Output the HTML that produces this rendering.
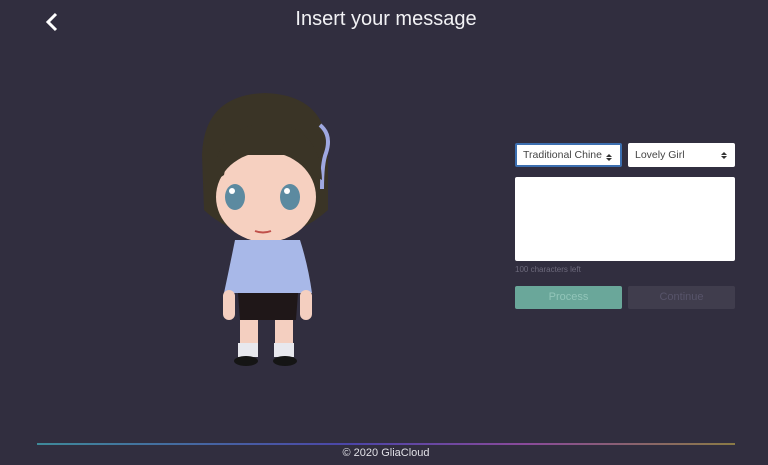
<!DOCTYPE html>
<html><head><style>
body{margin:0;width:768px;height:465px;background:#312e3f;font-family:"Liberation Sans",sans-serif;position:relative;overflow:hidden}
.t{position:absolute;top:8px;left:0;width:772px;text-align:center;color:#f2f2f5;font-size:20px}
.sel{position:absolute;top:143px;height:24px;background:#fff;border-radius:2px;font-size:10.5px;color:#444;line-height:24px;padding-left:7px;box-sizing:border-box;white-space:nowrap;overflow:hidden}
.sel:after{content:"";position:absolute;right:8px;top:9px;width:0;height:0;border-left:3px solid transparent;border-right:3px solid transparent;border-bottom:3px solid #333}
.sel:before{content:"";position:absolute;right:8px;top:13px;width:0;height:0;border-left:3px solid transparent;border-right:3px solid transparent;border-top:3px solid #333}
.ta{position:absolute;left:515px;top:177px;width:220px;height:84px;background:#fff;border-radius:2px}
.btn{position:absolute;top:286px;height:23px;width:107px;border-radius:2px;font-size:11px;text-align:center;line-height:23px}
</style></head><body>
<svg style="position:absolute;left:44px;top:12px" width="16" height="20"><path d="M12 2 L4 10 L12 18" stroke="#fff" stroke-width="3" fill="none"/></svg>
<div class="t">Insert your message</div>
<svg style="position:absolute;left:190px;top:85px" width="160" height="290">
<path d="M12 70 Q14 10 75 8 Q135 10 138 65 L138 125 Q110 150 80 150 Q40 150 14 125 Z" fill="#3a3426"/>
<path d="M130 40 q12 10 6 28 q-4 10 -4 36" stroke="#9fa8e0" stroke-width="4" fill="none"/>
<ellipse cx="76" cy="112" rx="50" ry="45" fill="#f6d0c0"/>
<path d="M22 98 Q26 40 78 38 Q130 40 132 95 L120 88 L118 70 L38 70 L34 90Z" fill="#3a3426"/>
<ellipse cx="45" cy="112" rx="10" ry="13" fill="#5c8aa0"/><ellipse cx="100" cy="112" rx="10" ry="13" fill="#5c8aa0"/>
<circle cx="42" cy="106" r="3" fill="#fff"/><circle cx="97" cy="106" r="3" fill="#fff"/>
<path d="M65 146 q8 3 16 0" stroke="#c0504a" stroke-width="2" fill="none"/>
<path d="M45 155 L110 155 Q118 180 122 208 L34 208 Q40 180 45 155Z" fill="#a8b8e8"/>
<rect x="33" y="205" width="12" height="30" rx="6" fill="#f4cfc0"/><rect x="110" y="205" width="12" height="30" rx="6" fill="#f4cfc0"/>
<path d="M48 208 L108 208 L106 235 L50 235Z" fill="#1f1718"/>
<rect x="50" y="235" width="18" height="30" fill="#f4cfc0"/><rect x="85" y="235" width="18" height="30" fill="#f4cfc0"/>
<rect x="48" y="258" width="20" height="14" fill="#e8e8ee"/><rect x="84" y="258" width="20" height="14" fill="#e8e8ee"/>
<ellipse cx="56" cy="276" rx="12" ry="5" fill="#151515"/><ellipse cx="95" cy="276" rx="12" ry="5" fill="#151515"/>
</svg>
<div class="sel" style="left:515px;width:107px;border:2px solid #3c6fb0;line-height:20px;padding-right:16px;padding-left:6px">Traditional Chine</div>
<div class="sel" style="left:628px;width:107px">Lovely Girl</div>
<div class="ta"></div>
<div style="position:absolute;left:515px;top:265px;font-size:8px;color:#6d6a7c">100 characters left</div>
<div class="btn" style="left:515px;background:#6aa79a;color:#92c5b9">Process</div>
<div class="btn" style="left:628px;background:#403d4d;color:#57546a">Continue</div>
<div style="position:absolute;left:37px;top:443px;width:698px;height:2px;background:linear-gradient(90deg,#3f8a9a,#4c45a8 45%,#8a4a9a 70%,#8a7a45)"></div>
<div style="position:absolute;top:447px;left:0;width:772px;text-align:center;color:#e0e0e6;font-size:11px">© 2020 GliaCloud</div>
</body></html>
